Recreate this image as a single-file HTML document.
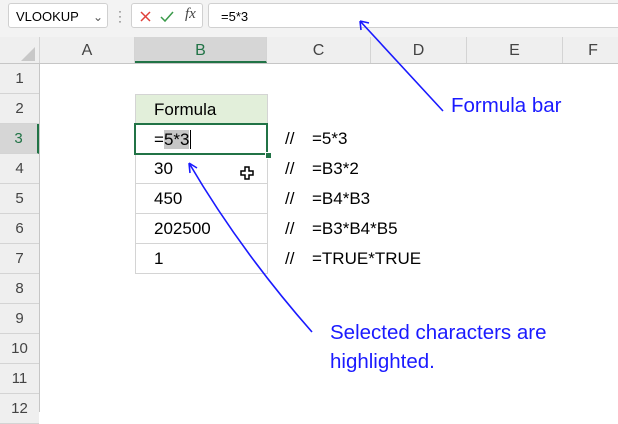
<!DOCTYPE html>
<html><head><style>
body{margin:0;width:618px;height:412px;overflow:hidden;background:#fff;font-family:"Liberation Sans",sans-serif;position:relative}
.a{position:absolute}
.rh{position:absolute;left:0;width:39px;text-align:center;font-size:15px;color:#444;background:#efefef;border-bottom:1px solid #d4d4d4;height:29px;line-height:30px}
.ch{position:absolute;top:37px;height:26px;line-height:28px;text-align:center;font-size:16px;color:#444;background:#efefef;border-right:1px solid #d4d4d4}
.cell{position:absolute;left:135px;width:113px;height:29px;border:1px solid #d4d4d4;border-top:none;line-height:30px;padding-left:18px;font-size:17px}
.cm{position:absolute;left:285px;font-size:17px;line-height:30px}
.cm span{position:absolute;left:27px;white-space:nowrap}
.bl{color:#1a1aff;font-size:20.5px}
</style></head><body>
<div class="a" style="left:0;top:0;width:618px;height:37px;background:#f3f3f3"></div>
<div class="a" style="left:8px;top:3px;width:100px;height:25px;background:#fff;border:1px solid #d0d0d0;border-radius:3px;font-size:13px;line-height:26px;padding-left:7px;box-sizing:border-box">VLOOKUP<span style="position:absolute;left:84px;top:0;color:#555;font-size:12px">&#8964;</span></div>
<div class="a" style="left:118px;top:9px;font-size:12px;line-height:5px;color:#555">·<br>·<br>·</div>
<div class="a" style="left:131px;top:3px;width:72px;height:25px;background:#fff;border:1px solid #d0d0d0;border-radius:3px;box-sizing:border-box">
<svg width="72" height="25" style="position:absolute;left:0;top:0"><path d="M9 8l9 9M18 8l-9 9" stroke="#e0403a" stroke-width="1.5"/><path d="M29 13l4 4 8-9" stroke="#3a9a4a" stroke-width="1.5" fill="none"/></svg>
<span style="position:absolute;left:53px;top:2px;font-family:'Liberation Serif',serif;font-style:italic;font-size:15px;color:#444">fx</span></div>
<div class="a" style="left:208px;top:3px;width:420px;height:25px;background:#fff;border:1px solid #d0d0d0;border-radius:3px;box-sizing:border-box;font-size:13px;line-height:25px;padding-left:12px">=5*3</div>
<div class="a" style="left:0;top:37px;width:39px;height:26px;background:#efefef;border-right:1px solid #d4d4d4"><svg width="39" height="26"><path d="M35 10L35 24L21 24Z" fill="#c8c8c8"/></svg></div>
<div class="a" style="left:0;top:63px;width:618px;height:1px;background:#c6c6c6"></div>
<div class="ch" style="left:40px;width:94px">A</div>
<div class="ch" style="left:135px;width:131px;background:#d6d6d6;color:#217346;border-bottom:2px solid #217346;height:24px">B</div>
<div class="ch" style="left:267px;width:103px">C</div>
<div class="ch" style="left:371px;width:95px">D</div>
<div class="ch" style="left:467px;width:95px">E</div>
<div class="ch" style="left:563px;width:60px">F</div>
<div class="a" style="left:39px;top:64px;width:1px;height:348px;background:#c6c6c6"></div>
<div class="rh" style="top:64px">1</div>
<div class="rh" style="top:94px">2</div>
<div class="rh" style="top:124px;background:#d6d6d6;color:#217346;border-right:2px solid #217346;width:37px">3</div>
<div class="rh" style="top:154px">4</div>
<div class="rh" style="top:184px">5</div>
<div class="rh" style="top:214px">6</div>
<div class="rh" style="top:244px">7</div>
<div class="rh" style="top:274px">8</div>
<div class="rh" style="top:304px">9</div>
<div class="rh" style="top:334px">10</div>
<div class="rh" style="top:364px">11</div>
<div class="rh" style="top:394px">12</div>
<div class="cell" style="top:94px;background:#e2efda;border-top:1px solid #d4d4d4;height:29px">Formula</div>
<div class="cell" style="top:154px">30</div>
<div class="cell" style="top:184px">450</div>
<div class="cell" style="top:214px">202500</div>
<div class="cell" style="top:244px">1</div>
<div class="a" style="left:134px;top:123px;width:134px;height:32px;box-sizing:border-box;border:2px solid #217346;font-size:17px;line-height:29px;padding-left:18px">=<span style="background:#c6c6c6">5*3</span><span style="border-left:1px solid #000;margin-left:1px"></span></div>
<div class="a" style="left:265px;top:152px;width:5px;height:5px;background:#217346;border:1px solid #fff"></div>
<div class="cm" style="top:124px">//<span>=5*3</span></div>
<div class="cm" style="top:154px">//<span>=B3*2</span></div>
<div class="cm" style="top:184px">//<span>=B4*B3</span></div>
<div class="cm" style="top:214px">//<span>=B3*B4*B5</span></div>
<div class="cm" style="top:244px">//<span>=TRUE*TRUE</span></div>
<svg class="a" style="left:240px;top:166px" width="14" height="14"><path d="M5 1h4v4h4v4h-4v4h-4v-4h-4v-4h4z" fill="#fff" stroke="#000" stroke-width="1.5"/></svg>
<svg class="a" style="left:0;top:0" width="618" height="412"><g stroke="#1a1aff" stroke-width="1.6" fill="none"><path d="M443 111L360 21M360 21l1 9M360 21l9 2"/><path d="M312 332Q240 250 189 163M189 163l1 10M189 163l8 5"/></g></svg>
<div class="a bl" style="left:451px;top:94px">Formula bar</div>
<div class="a bl" style="left:330px;top:321px">Selected characters are</div>
<div class="a bl" style="left:330px;top:350px">highlighted.</div>
</body></html>
